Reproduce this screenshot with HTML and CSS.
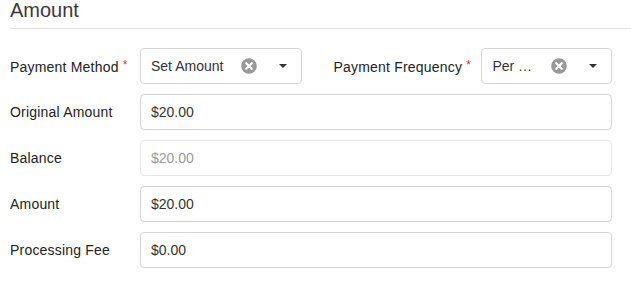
FILE: index.html
```html
<!DOCTYPE html>
<html lang="en">

<head>
  <meta charset="UTF-8">
  <meta name="viewport" content="width=device-width, initial-scale=1.0">
  <title>Amount</title>
  <link rel="stylesheet" href="styles.css">
</head>

<body>
  <section class="panel">
    <h2 class="panel-title">Amount</h2>
    <form class="fields">
      <div class="row">
        <label class="label">Payment Method <span class="req">*</span></label>
        <div class="select method">
          <span class="select-value">Set Amount</span>
          <span class="clear">
            <svg width="16" height="16" viewBox="0 0 16 16">
              <circle cx="8" cy="8" r="7.8" fill="#999" />
              <path d="M5.2 5.2 L10.8 10.8 M10.8 5.2 L5.2 10.8" stroke="#fff" stroke-width="2.2" stroke-linecap="round" />
            </svg>
          </span>
          <span class="caret"></span>
        </div>
        <label class="label freq-label">Payment Frequency <span class="req">*</span></label>
        <div class="select freq">
          <span class="select-value">Per …</span>
          <span class="clear">
            <svg width="16" height="16" viewBox="0 0 16 16">
              <circle cx="8" cy="8" r="7.8" fill="#999" />
              <path d="M5.2 5.2 L10.8 10.8 M10.8 5.2 L5.2 10.8" stroke="#fff" stroke-width="2.2" stroke-linecap="round" />
            </svg>
          </span>
          <span class="caret"></span>
        </div>
      </div>
      <div class="row">
        <label class="label">Original Amount</label>
        <input class="input" type="text" value="$20.00">
      </div>
      <div class="row">
        <label class="label">Balance</label>
        <input class="input" type="text" value="$20.00" disabled>
      </div>
      <div class="row">
        <label class="label">Amount</label>
        <input class="input" type="text" value="$20.00">
      </div>
      <div class="row">
        <label class="label">Processing Fee</label>
        <input class="input" type="text" value="$0.00">
      </div>
    </form>
  </section>
</body>

</html>
```

FILE: styles.css
```css
:root {
  font-family: "Liberation Sans", Arial, sans-serif;
  color: #333;
}

body {
  margin: 0;
  background: #fff;
}

.panel {
  padding-left: 10px;
}

.panel-title {
  margin: 0;
  font-size: 20px;
  font-weight: normal;
  line-height: 20px;
  color: #3a3a3a;
  padding-bottom: 8px;
  border-bottom: 1px solid #ddd;
}

.fields {
  display: flex;
  flex-direction: column;
  gap: 10px;
  padding-top: 19px;
  width: 602px;
}

.row {
  display: flex;
  align-items: center;
  height: 36px;
}

.label {
  width: 130px;
  flex: none;
  font-size: 14px;
  letter-spacing: 0.2px;
  color: #222;
}

.req {
  color: #e0302d;
  font-size: 12px;
  vertical-align: 3px;
}

.input,
.select {
  box-sizing: border-box;
  height: 36px;
  border: 1px solid #d4d4d4;
  border-radius: 4px;
  background: #fff;
  font: inherit;
  font-size: 14px;
  color: #333;
}

.input {
  flex: 1;
  padding: 0 10px;
  outline: none;
}

.input:disabled {
  border-color: #e8e8e8;
  color: #999;
}

.select {
  display: flex;
  align-items: center;
  padding-left: 10px;
}

.select.method {
  width: 163px;
}

.select.freq {
  width: 131px;
}

.select-value {
  flex: 1;
  white-space: nowrap;
}

.clear {
  display: flex;
  width: 16px;
  height: 16px;
}

.caret {
  width: 0;
  height: 0;
  border-left: 4px solid transparent;
  border-right: 4px solid transparent;
  border-top: 4px solid #333;
  margin: 0 14px 0 22px;
}

.freq-label {
  width: 148px;
  margin-left: 31px;
}
```
